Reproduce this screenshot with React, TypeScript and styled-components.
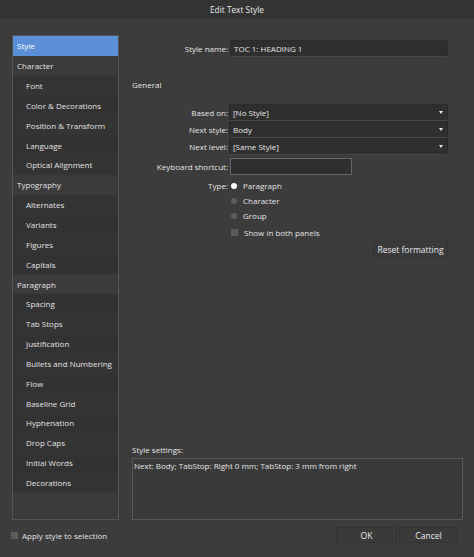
import styled, { createGlobalStyle } from 'styled-components'

const GlobalStyle = createGlobalStyle`
  html, body {
    margin: 0;
    padding: 0;
    background: #3c3c3c;
  }
  * {
    box-sizing: border-box;
  }
`

const Window = styled.div`
  width: 474px;
  height: 557px;
  display: flex;
  flex-direction: column;
  background: #3c3c3c;
  color: #e4e4e4;
  font-family: 'Open Sans', 'Noto Sans', sans-serif;
  font-size: 8px;
  overflow: hidden;
`

const TitleBar = styled.div`
  height: 18px;
  background: #333333;
  display: flex;
  align-items: center;
  justify-content: center;
  font-size: 8.3px;
  color: #e8e8e8;
`

const Body = styled.div`
  flex: 1;
  display: flex;
  padding: 17px 0 0 12px;
`

const Sidebar = styled.ul`
  width: 107px;
  height: 485px;
  margin: 0;
  padding: 0;
  list-style: none;
  border: 1px solid #555555;
  background: #3b3b3b;
`

const SidebarItem = styled.li<{ $sub?: boolean; $active?: boolean; $odd?: boolean }>`
  height: 19.85px;
  display: flex;
  align-items: center;
  padding-left: ${(p) => (p.$sub ? '13px' : '4px')};
  background: ${(p) => (p.$active ? '#5b8fd7' : p.$sub ? (p.$odd ? '#323232' : '#343434') : 'transparent')};
  color: ${(p) => (p.$active ? '#ffffff' : '#e2e2e2')};
  white-space: nowrap;
`

const Content = styled.div`
  flex: 1;
  display: flex;
  flex-direction: column;
  padding: 5px 11px 0 13px;
`

const FormGrid = styled.div<{ $gap?: number }>`
  display: grid;
  grid-template-columns: 96px 218px;
  column-gap: 2px;
  align-items: center;
  margin-top: ${(p) => p.$gap ?? 0}px;
`

const Label = styled.span`
  text-align: right;
  white-space: nowrap;
`

const TextField = styled.div<{ $width?: number; $outlined?: boolean }>`
  height: 17px;
  width: ${(p) => (p.$width ? `${p.$width}px` : '100%')};
  background: #2f2f2f;
  border: 1px solid ${(p) => (p.$outlined ? '#666666' : '#2b2b2b')};
  border-bottom-color: ${(p) => (p.$outlined ? '#666666' : '#474747')};
  display: flex;
  align-items: center;
  padding-left: 3px;
  color: #e6e6e6;
`

const Select = styled(TextField)`
  justify-content: space-between;
  padding-right: 4px;
  margin-left: -1px;
  width: calc(100% + 1px);
`

const Arrow = styled.span`
  width: 0;
  height: 0;
  border-left: 2.5px solid transparent;
  border-right: 2.5px solid transparent;
  border-top: 3px solid #e8e8e8;
`

const SectionTitle = styled.div`
  margin: 22px 0 13px;
  height: 12px;
  line-height: 12px;
`

const Options = styled.div`
  display: flex;
  flex-direction: column;
  grid-column: 2;
`

const OptionRow = styled.div<{ $gap?: number }>`
  height: 15px;
  display: flex;
  align-items: center;
  gap: 6px;
  padding-left: 1px;
  margin-top: ${(p) => p.$gap ?? 0}px;
`

const Radio = styled.span<{ $checked?: boolean }>`
  width: 6px;
  height: 6px;
  border-radius: 50%;
  background: ${(p) => (p.$checked ? '#ffffff' : '#5e5e5e')};
`

const Checkbox = styled.span`
  width: 7px;
  height: 7px;
  background: #5c5c5c;
`

const Button = styled.div<{ $width: number; $height?: number }>`
  width: ${(p) => p.$width}px;
  height: ${(p) => p.$height ?? 17}px;
  display: flex;
  align-items: center;
  justify-content: center;
  background: #3a3a3a;
  border: 1px solid #333333;
  color: #e8e8e8;
  font-size: 8.5px;
`

const ResetRow = styled.div`
  display: flex;
  justify-content: flex-end;
  width: 316px;
  margin-top: 1px;
`

const Spacer = styled.div`
  flex: 1;
`

const SettingsLabel = styled.div`
  height: 12px;
  line-height: 12px;
  margin-bottom: 2px;
`

const SettingsBox = styled.div`
  height: 62px;
  border: 1px solid #585858;
  background: #3a3a3a;
  padding: 1px 0 0 1px;
  white-space: nowrap;
`

const Footer = styled.div`
  height: 37px;
  display: flex;
  align-items: center;
  padding: 0 16px 7px 11px;
  gap: 2px;
`

const ApplyLabel = styled.div`
  display: flex;
  align-items: center;
  gap: 4px;
  margin-right: auto;
  padding-top: 1px;
`

const sidebarItems: { label: string; sub?: boolean }[] = [
  { label: 'Style' },
  { label: 'Character' },
  { label: 'Font', sub: true },
  { label: 'Color & Decorations', sub: true },
  { label: 'Position & Transform', sub: true },
  { label: 'Language', sub: true },
  { label: 'Optical Alignment', sub: true },
  { label: 'Typography' },
  { label: 'Alternates', sub: true },
  { label: 'Variants', sub: true },
  { label: 'Figures', sub: true },
  { label: 'Capitals', sub: true },
  { label: 'Paragraph' },
  { label: 'Spacing', sub: true },
  { label: 'Tab Stops', sub: true },
  { label: 'Justification', sub: true },
  { label: 'Bullets and Numbering', sub: true },
  { label: 'Flow', sub: true },
  { label: 'Baseline Grid', sub: true },
  { label: 'Hyphenation', sub: true },
  { label: 'Drop Caps', sub: true },
  { label: 'Initial Words', sub: true },
  { label: 'Decorations', sub: true },
]

const App = () => {
  return (
    <>
      <GlobalStyle />
      <Window>
        <TitleBar>Edit Text Style</TitleBar>
        <Body>
          <Sidebar>
            {sidebarItems.map((item, i) => (
              <SidebarItem key={item.label} $sub={item.sub} $active={i === 0} $odd={i % 2 === 1}>
                {item.label}
              </SidebarItem>
            ))}
          </Sidebar>
          <Content>
            <FormGrid>
              <Label>Style name:</Label>
              <TextField>TOC 1: HEADING 1</TextField>
            </FormGrid>
            <SectionTitle>General</SectionTitle>
            <FormGrid>
              <Label>Based on:</Label>
              <Select>
                [No Style]
                <Arrow />
              </Select>
              <Label>Next style:</Label>
              <Select>
                Body
                <Arrow />
              </Select>
              <Label>Next level:</Label>
              <Select>
                [Same Style]
                <Arrow />
              </Select>
            </FormGrid>
            <FormGrid $gap={3}>
              <Label>Keyboard shortcut:</Label>
              <TextField $width={122} $outlined />
            </FormGrid>
            <FormGrid $gap={3}>
              <Label>Type:</Label>
              <OptionRow>
                <Radio $checked />
                Paragraph
              </OptionRow>
              <Options>
                <OptionRow>
                  <Radio />
                  Character
                </OptionRow>
                <OptionRow>
                  <Radio />
                  Group
                </OptionRow>
                <OptionRow $gap={2}>
                  <Checkbox />
                  Show in both panels
                </OptionRow>
              </Options>
            </FormGrid>
            <ResetRow>
              <Button $width={75}>Reset formatting</Button>
            </ResetRow>
            <Spacer />
            <SettingsLabel>Style settings:</SettingsLabel>
            <SettingsBox>Next: Body; TabStop: Right 0 mm; TabStop: 3 mm from right</SettingsBox>
          </Content>
        </Body>
        <Footer>
          <ApplyLabel>
            <Checkbox />
            Apply style to selection
          </ApplyLabel>
          <Button $width={61} $height={16}>OK</Button>
          <Button $width={59} $height={16}>Cancel</Button>
        </Footer>
      </Window>
    </>
  )
}

export default App
